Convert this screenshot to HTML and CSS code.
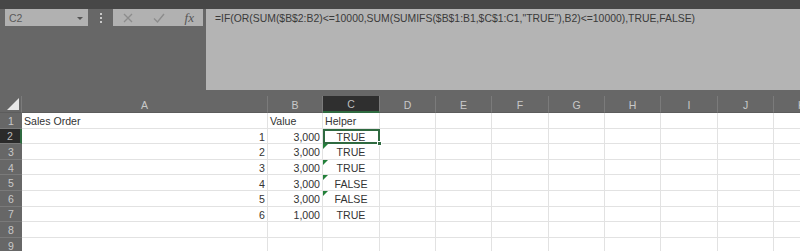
FILE: index.html
```html
<!DOCTYPE html>
<html>
<head>
<meta charset="utf-8">
<link rel="stylesheet" href="styles.css">
</head>
<body>
<div class="topstrip"></div>
<div class="bar">
  <div class="namebox"><span>C2</span><span class="caret"></span></div>
  <div class="dots"><i></i><i></i><i></i></div>
  <div class="btns">
    <svg class="ic" width="12" height="12" viewBox="0 0 12 12"><path d="M2 2L10 10M10 2L2 10" stroke="#8c8c8c" stroke-width="1.3" fill="none"/></svg>
    <svg class="ic" width="14" height="12" viewBox="0 0 14 12"><path d="M2 6.5L5.5 10L12 2" stroke="#8c8c8c" stroke-width="1.4" fill="none"/></svg>
    <span class="fx">fx</span>
  </div>
  <div class="formula">=IF(OR(SUM($B$2:B2)&lt;=10000,SUM(SUMIFS($B$1:B1,$C$1:C1,"TRUE"),B2)&lt;=10000),TRUE,FALSE)</div>
</div>
<div class="sheet">
  <div class="hd corner"><span class="tri"></span></div>
  <div class="hd">A</div><div class="hd">B</div><div class="hd sel">C</div><div class="hd">D</div><div class="hd">E</div><div class="hd">F</div><div class="hd">G</div><div class="hd">H</div><div class="hd">I</div><div class="hd">J</div><div class="hd">K</div>

  <div class="rh">1</div><div class="c">Sales Order</div><div class="c">Value</div><div class="c">Helper</div><div class="c"></div><div class="c"></div><div class="c"></div><div class="c"></div><div class="c"></div><div class="c"></div><div class="c"></div><div class="c"></div>

  <div class="rh rsel">2</div><div class="c r">1</div><div class="c r">3,000</div><div class="c m active">TRUE<span class="handle"></span></div><div class="c"></div><div class="c"></div><div class="c"></div><div class="c"></div><div class="c"></div><div class="c"></div><div class="c"></div><div class="c"></div>

  <div class="rh">3</div><div class="c r">2</div><div class="c r">3,000</div><div class="c m err">TRUE</div><div class="c"></div><div class="c"></div><div class="c"></div><div class="c"></div><div class="c"></div><div class="c"></div><div class="c"></div><div class="c"></div>

  <div class="rh">4</div><div class="c r">3</div><div class="c r">3,000</div><div class="c m err">TRUE</div><div class="c"></div><div class="c"></div><div class="c"></div><div class="c"></div><div class="c"></div><div class="c"></div><div class="c"></div><div class="c"></div>

  <div class="rh">5</div><div class="c r">4</div><div class="c r">3,000</div><div class="c m err">FALSE</div><div class="c"></div><div class="c"></div><div class="c"></div><div class="c"></div><div class="c"></div><div class="c"></div><div class="c"></div><div class="c"></div>

  <div class="rh">6</div><div class="c r">5</div><div class="c r">3,000</div><div class="c m err">FALSE</div><div class="c"></div><div class="c"></div><div class="c"></div><div class="c"></div><div class="c"></div><div class="c"></div><div class="c"></div><div class="c"></div>

  <div class="rh">7</div><div class="c r">6</div><div class="c r">1,000</div><div class="c m">TRUE</div><div class="c"></div><div class="c"></div><div class="c"></div><div class="c"></div><div class="c"></div><div class="c"></div><div class="c"></div><div class="c"></div>

  <div class="rh">8</div><div class="c"></div><div class="c"></div><div class="c"></div><div class="c"></div><div class="c"></div><div class="c"></div><div class="c"></div><div class="c"></div><div class="c"></div><div class="c"></div><div class="c"></div>

  <div class="rh">9</div><div class="c"></div><div class="c"></div><div class="c"></div><div class="c"></div><div class="c"></div><div class="c"></div><div class="c"></div><div class="c"></div><div class="c"></div><div class="c"></div><div class="c"></div>
</div>
</body>
</html>
```

FILE: styles.css
```css
* { box-sizing: border-box; }
html, body { margin: 0; padding: 0; }
body {
  width: 800px;
  height: 251px;
  overflow: hidden;
  background: #676767;
  font-family: "Liberation Sans", Arial, sans-serif;
}
.topstrip {
  height: 9px;
  background: #474747;
}
.bar {
  display: flex;
  align-items: flex-start;
  height: 87px;
  padding-left: 5px;
}
.namebox {
  width: 83px;
  height: 17px;
  background: #b1b1b1;
  display: flex;
  align-items: center;
  justify-content: space-between;
  padding: 1px 5px 0 4px;
  font-size: 10.5px;
  color: #5a5a5a;
}
.caret {
  width: 0; height: 0;
  border-left: 3px solid transparent;
  border-right: 3px solid transparent;
  border-top: 3px solid #555;
}
.dots {
  width: 25px;
  height: 17px;
  display: flex;
  flex-direction: column;
  align-items: center;
  justify-content: center;
  gap: 2px;
}
.dots i {
  display: block;
  width: 2px;
  height: 2px;
  background: #c8c8c8;
}
.btns {
  width: 90px;
  height: 17px;
  background: #b1b1b1;
  display: flex;
  align-items: center;
  justify-content: space-between;
  padding: 0 9px 0 9px;
}
.fx {
  font-family: "Liberation Serif", serif;
  font-style: italic;
  font-size: 13px;
  color: #555;
  line-height: 1;
}
.formula {
  margin-left: 3px;
  flex: 1;
  height: 81px;
  background: #b4b4b4;
  padding: 4px 0 0 9px;
  font-size: 10.4px;
  color: #3a3a3a;
  white-space: nowrap;
}
.sheet {
  display: grid;
  width: 800px;
  overflow: hidden;
  grid-template-columns: 22px 246px 55px 57px 56px 56px 57px 56px 56px 57px 56px 56px;
  grid-template-rows: 17px;
  grid-auto-rows: 15.6px;
}
.hd {
  background: #676767;
  color: #c9c9c9;
  font-size: 10.5px;
  display: flex;
  align-items: center;
  justify-content: center;
  padding-top: 1px;
  border-right: 1px solid #7b7b7b;
  border-bottom: 1px solid #5c5c5c;
}
.hd.sel {
  background: #2f2f2f;
  color: #bdbdbd;
  border-bottom: 2px solid #2f6a40;
}
.corner {
  position: relative;
  border-right: 1px solid #7b7b7b;
}
.tri {
  position: absolute;
  right: 2px;
  bottom: 2px;
  width: 0; height: 0;
  border-left: 12px solid transparent;
  border-bottom: 12px solid #e8e8e8;
}
.rh {
  background: #676767;
  color: #c9c9c9;
  font-size: 10.5px;
  display: flex;
  align-items: center;
  justify-content: center;
  padding-top: 1px;
  border-bottom: 1px solid #7a7a7a;
}
.rh.rsel {
  background: #2a2a2a;
  color: #bbb;
  border-right: 2px solid #2f6a40;
}
.c {
  background: #fff;
  border-right: 1px solid #e2e2e2;
  border-bottom: 1px solid #e2e2e2;
  font-size: 10.6px;
  color: #333;
  display: flex;
  align-items: center;
  padding: 2px 2px 0 2px;
  white-space: nowrap;
  position: relative;
}
.c.r { justify-content: flex-end; }
.c.m { justify-content: center; }
.active {
  outline: 2px solid #2f6a40;
  outline-offset: -2px;
  z-index: 2;
}
.handle {
  position: absolute;
  right: -3px;
  bottom: -3px;
  width: 5px;
  height: 5px;
  background: #2f6a40;
  border: 1px solid #fff;
}
.err::before {
  content: "";
  position: absolute;
  left: 0;
  top: 0;
  width: 0; height: 0;
  border-top: 5px solid #23803a;
  border-right: 5px solid transparent;
}
```
